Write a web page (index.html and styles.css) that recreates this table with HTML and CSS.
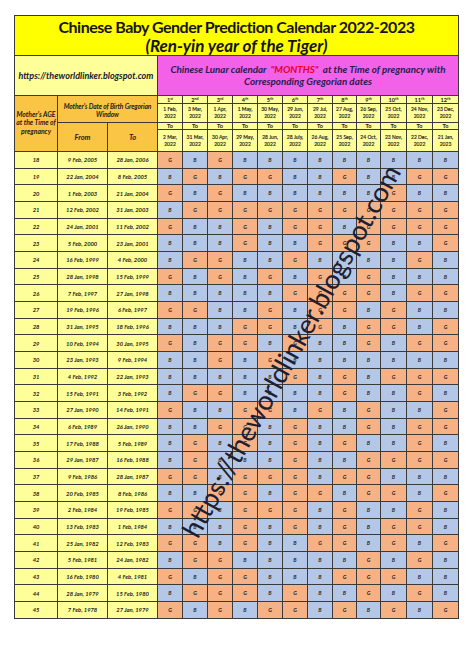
FILE: index.html
```html
<!DOCTYPE html>
<html lang="en">
<head>
<meta charset="utf-8">
<title>Chinese Baby Gender Prediction Calendar 2022-2023</title>
<link rel="stylesheet" href="styles.css">
</head>
<body>
<div class="page">
<table class="chart">
<colgroup>
<col class="c-age"><col class="c-dob"><col class="c-dob">
<col class="c-m25"><col class="c-m25"><col class="c-m25"><col class="c-m25"><col class="c-m25"><col class="c-m25"><col class="c-m25"><col class="c-m24"><col class="c-m24"><col class="c-m26"><col class="c-m26"><col class="c-m26">
</colgroup>
<tr class="r-title"><td colspan="15" class="title"><span class="main">Chinese Baby Gender Prediction Calendar 2022-2023</span><br><span class="sub">(Ren-yin year of the Tiger)</span></td></tr>
<tr class="r-info"><td colspan="3" class="site">https://theworldlinker.blogspot.com</td><td colspan="12" class="lunar">Chinese Lunar calendar &nbsp;<span class="red">"MONTHS"</span>&nbsp; at the Time of pregnancy with<br>Corresponding Gregorian dates</td></tr>
<tr class="h1">
<td rowspan="4" class="hdr age">Mother's AGE at the Time of pregnancy</td>
<td colspan="2" rowspan="2" class="hdr dob">Mother's Date of Birth Gregorian Window</td>
<td class="mon ord">1<sup>st</sup></td><td class="mon ord">2<sup>nd</sup></td><td class="mon ord">3<sup>rd</sup></td><td class="mon ord">4<sup>th</sup></td><td class="mon ord">5<sup>th</sup></td><td class="mon ord">6<sup>th</sup></td><td class="mon ord">7<sup>th</sup></td><td class="mon ord">8<sup>th</sup></td><td class="mon ord">9<sup>th</sup></td><td class="mon ord">10<sup>th</sup></td><td class="mon ord">11<sup>th</sup></td><td class="mon ord">12<sup>th</sup></td>
</tr>
<tr class="h2">
<td class="mon dt">1 Feb,<br>2022</td><td class="mon dt">3 Mar,<br>2022</td><td class="mon dt">1 Apr,<br>2022</td><td class="mon dt">1 May,<br>2022</td><td class="mon dt">30 May,<br>2022</td><td class="mon dt">29 Jun,<br>2022</td><td class="mon dt">29 Jul,<br>2022</td><td class="mon dt">27 Aug,<br>2022</td><td class="mon dt">26 Sep,<br>2022</td><td class="mon dt">25 Oct,<br>2022</td><td class="mon dt">24 Nov,<br>2022</td><td class="mon dt">23 Dec,<br>2022</td>
</tr>
<tr class="h3">
<td rowspan="2" class="hdr ft">From</td><td rowspan="2" class="hdr ft">To</td>
<td class="mon to">To</td><td class="mon to">To</td><td class="mon to">To</td><td class="mon to">To</td><td class="mon to">To</td><td class="mon to">To</td><td class="mon to">To</td><td class="mon to">To</td><td class="mon to">To</td><td class="mon to">To</td><td class="mon to">To</td><td class="mon to">To</td>
</tr>
<tr class="h4">
<td class="mon dt">2 Mar,<br>2022</td><td class="mon dt">31 Mar,<br>2022</td><td class="mon dt">30 Apr,<br>2022</td><td class="mon dt">29 May,<br>2022</td><td class="mon dt">28 Jun,<br>2022</td><td class="mon dt">28 July,<br>2022</td><td class="mon dt">26 Aug,<br>2022</td><td class="mon dt">25 Sep,<br>2022</td><td class="mon dt">24 Oct,<br>2022</td><td class="mon dt">23 Nov,<br>2022</td><td class="mon dt">22 Dec,<br>2022</td><td class="mon dt">21 Jan,<br>2023</td>
</tr>
<tr class="row"><td class="yl">18</td><td class="yl">9 Feb, 2005</td><td class="yl">28 Jan, 2006</td><td class="g">G</td><td class="b">B</td><td class="g">G</td><td class="b">B</td><td class="b">B</td><td class="b">B</td><td class="b">B</td><td class="b">B</td><td class="b">B</td><td class="b">B</td><td class="b">B</td><td class="b">B</td></tr>
<tr class="row"><td class="yl">19</td><td class="yl">22 Jan, 2004</td><td class="yl">8 Feb, 2005</td><td class="b">B</td><td class="g">G</td><td class="b">B</td><td class="g">G</td><td class="g">G</td><td class="b">B</td><td class="b">B</td><td class="g">G</td><td class="b">B</td><td class="b">B</td><td class="g">G</td><td class="g">G</td></tr>
<tr class="row"><td class="yl">20</td><td class="yl">1 Feb, 2003</td><td class="yl">21 Jan, 2004</td><td class="g">G</td><td class="b">B</td><td class="g">G</td><td class="b">B</td><td class="b">B</td><td class="b">B</td><td class="b">B</td><td class="b">B</td><td class="b">B</td><td class="g">G</td><td class="b">B</td><td class="b">B</td></tr>
<tr class="row"><td class="yl">21</td><td class="yl">12 Feb, 2002</td><td class="yl">31 Jan, 2003</td><td class="b">B</td><td class="g">G</td><td class="g">G</td><td class="g">G</td><td class="g">G</td><td class="g">G</td><td class="g">G</td><td class="g">G</td><td class="g">G</td><td class="g">G</td><td class="g">G</td><td class="g">G</td></tr>
<tr class="row"><td class="yl">22</td><td class="yl">24 Jan, 2001</td><td class="yl">11 Feb, 2002</td><td class="g">G</td><td class="b">B</td><td class="b">B</td><td class="g">G</td><td class="b">B</td><td class="g">G</td><td class="g">G</td><td class="b">B</td><td class="g">G</td><td class="g">G</td><td class="g">G</td><td class="g">G</td></tr>
<tr class="row"><td class="yl">23</td><td class="yl">5 Feb, 2000</td><td class="yl">23 Jan, 2001</td><td class="b">B</td><td class="b">B</td><td class="b">B</td><td class="g">G</td><td class="b">B</td><td class="b">B</td><td class="g">G</td><td class="g">G</td><td class="g">G</td><td class="b">B</td><td class="b">B</td><td class="g">G</td></tr>
<tr class="row"><td class="yl">24</td><td class="yl">16 Feb, 1999</td><td class="yl">4 Feb, 2000</td><td class="b">B</td><td class="g">G</td><td class="g">G</td><td class="b">B</td><td class="b">B</td><td class="g">G</td><td class="b">B</td><td class="b">B</td><td class="b">B</td><td class="b">B</td><td class="g">G</td><td class="b">B</td></tr>
<tr class="row"><td class="yl">25</td><td class="yl">28 Jan, 1998</td><td class="yl">15 Feb, 1999</td><td class="g">G</td><td class="b">B</td><td class="g">G</td><td class="b">B</td><td class="g">G</td><td class="b">B</td><td class="g">G</td><td class="b">B</td><td class="g">G</td><td class="b">B</td><td class="b">B</td><td class="b">B</td></tr>
<tr class="row"><td class="yl">26</td><td class="yl">7 Feb, 1997</td><td class="yl">27 Jan, 1998</td><td class="b">B</td><td class="b">B</td><td class="b">B</td><td class="b">B</td><td class="b">B</td><td class="g">G</td><td class="g">G</td><td class="g">G</td><td class="g">G</td><td class="b">B</td><td class="g">G</td><td class="g">G</td></tr>
<tr class="row"><td class="yl">27</td><td class="yl">19 Feb, 1996</td><td class="yl">6 Feb, 1997</td><td class="g">G</td><td class="g">G</td><td class="b">B</td><td class="b">B</td><td class="g">G</td><td class="b">B</td><td class="g">G</td><td class="g">G</td><td class="b">B</td><td class="g">G</td><td class="b">B</td><td class="b">B</td></tr>
<tr class="row"><td class="yl">28</td><td class="yl">31 Jan, 1995</td><td class="yl">18 Feb, 1996</td><td class="b">B</td><td class="b">B</td><td class="b">B</td><td class="g">G</td><td class="g">G</td><td class="b">B</td><td class="g">G</td><td class="b">B</td><td class="g">G</td><td class="g">G</td><td class="b">B</td><td class="g">G</td></tr>
<tr class="row"><td class="yl">29</td><td class="yl">10 Feb, 1994</td><td class="yl">30 Jan, 1995</td><td class="g">G</td><td class="b">B</td><td class="g">G</td><td class="g">G</td><td class="b">B</td><td class="g">G</td><td class="b">B</td><td class="b">B</td><td class="g">G</td><td class="b">B</td><td class="g">G</td><td class="g">G</td></tr>
<tr class="row"><td class="yl">30</td><td class="yl">23 Jan, 1993</td><td class="yl">9 Feb, 1994</td><td class="b">B</td><td class="b">B</td><td class="g">G</td><td class="b">B</td><td class="g">G</td><td class="b">B</td><td class="b">B</td><td class="b">B</td><td class="b">B</td><td class="b">B</td><td class="b">B</td><td class="b">B</td></tr>
<tr class="row"><td class="yl">31</td><td class="yl">4 Feb, 1992</td><td class="yl">22 Jan, 1993</td><td class="b">B</td><td class="b">B</td><td class="b">B</td><td class="b">B</td><td class="b">B</td><td class="g">G</td><td class="b">B</td><td class="g">G</td><td class="b">B</td><td class="g">G</td><td class="g">G</td><td class="g">G</td></tr>
<tr class="row"><td class="yl">32</td><td class="yl">15 Feb, 1991</td><td class="yl">3 Feb, 1992</td><td class="b">B</td><td class="g">G</td><td class="g">G</td><td class="b">B</td><td class="b">B</td><td class="b">B</td><td class="b">B</td><td class="g">G</td><td class="b">B</td><td class="b">B</td><td class="g">G</td><td class="b">B</td></tr>
<tr class="row"><td class="yl">33</td><td class="yl">27 Jan, 1990</td><td class="yl">14 Feb, 1991</td><td class="g">G</td><td class="b">B</td><td class="b">B</td><td class="g">G</td><td class="g">G</td><td class="b">B</td><td class="g">G</td><td class="b">B</td><td class="g">G</td><td class="b">B</td><td class="b">B</td><td class="g">G</td></tr>
<tr class="row"><td class="yl">34</td><td class="yl">6 Feb, 1989</td><td class="yl">26 Jan, 1990</td><td class="b">B</td><td class="b">B</td><td class="g">G</td><td class="g">G</td><td class="b">B</td><td class="g">G</td><td class="b">B</td><td class="b">B</td><td class="g">G</td><td class="b">B</td><td class="g">G</td><td class="g">G</td></tr>
<tr class="row"><td class="yl">35</td><td class="yl">17 Feb, 1988</td><td class="yl">5 Feb, 1989</td><td class="b">B</td><td class="g">G</td><td class="b">B</td><td class="g">G</td><td class="b">B</td><td class="g">G</td><td class="b">B</td><td class="g">G</td><td class="b">B</td><td class="b">B</td><td class="g">G</td><td class="b">B</td></tr>
<tr class="row"><td class="yl">36</td><td class="yl">29 Jan, 1987</td><td class="yl">16 Feb, 1988</td><td class="b">B</td><td class="g">G</td><td class="b">B</td><td class="b">B</td><td class="b">B</td><td class="g">G</td><td class="b">B</td><td class="b">B</td><td class="g">G</td><td class="g">G</td><td class="g">G</td><td class="g">G</td></tr>
<tr class="row"><td class="yl">37</td><td class="yl">9 Feb, 1986</td><td class="yl">28 Jan, 1987</td><td class="g">G</td><td class="g">G</td><td class="b">B</td><td class="g">G</td><td class="g">G</td><td class="g">G</td><td class="b">B</td><td class="g">G</td><td class="g">G</td><td class="b">B</td><td class="b">B</td><td class="b">B</td></tr>
<tr class="row"><td class="yl">38</td><td class="yl">20 Feb, 1985</td><td class="yl">8 Feb, 1986</td><td class="b">B</td><td class="b">B</td><td class="g">G</td><td class="g">G</td><td class="b">B</td><td class="g">G</td><td class="g">G</td><td class="b">B</td><td class="g">G</td><td class="g">G</td><td class="b">B</td><td class="g">G</td></tr>
<tr class="row"><td class="yl">39</td><td class="yl">2 Feb, 1984</td><td class="yl">19 Feb, 1985</td><td class="g">G</td><td class="g">G</td><td class="b">B</td><td class="g">G</td><td class="g">G</td><td class="g">G</td><td class="b">B</td><td class="g">G</td><td class="b">B</td><td class="b">B</td><td class="g">G</td><td class="b">B</td></tr>
<tr class="row"><td class="yl">40</td><td class="yl">13 Feb, 1983</td><td class="yl">1 Feb, 1984</td><td class="b">B</td><td class="b">B</td><td class="b">B</td><td class="g">G</td><td class="b">B</td><td class="g">G</td><td class="b">B</td><td class="g">G</td><td class="b">B</td><td class="g">G</td><td class="g">G</td><td class="b">B</td></tr>
<tr class="row"><td class="yl">41</td><td class="yl">25 Jan, 1982</td><td class="yl">12 Feb, 1983</td><td class="g">G</td><td class="g">G</td><td class="b">B</td><td class="g">G</td><td class="b">B</td><td class="b">B</td><td class="g">G</td><td class="g">G</td><td class="b">B</td><td class="g">G</td><td class="b">B</td><td class="g">G</td></tr>
<tr class="row"><td class="yl">42</td><td class="yl">5 Feb, 1981</td><td class="yl">24 Jan, 1982</td><td class="b">B</td><td class="g">G</td><td class="g">G</td><td class="b">B</td><td class="b">B</td><td class="b">B</td><td class="b">B</td><td class="b">B</td><td class="g">G</td><td class="b">B</td><td class="g">G</td><td class="b">B</td></tr>
<tr class="row"><td class="yl">43</td><td class="yl">16 Feb, 1980</td><td class="yl">4 Feb, 1981</td><td class="g">G</td><td class="b">B</td><td class="g">G</td><td class="g">G</td><td class="b">B</td><td class="b">B</td><td class="b">B</td><td class="g">G</td><td class="g">G</td><td class="g">G</td><td class="b">B</td><td class="b">B</td></tr>
<tr class="row"><td class="yl">44</td><td class="yl">28 Jan, 1979</td><td class="yl">15 Feb, 1980</td><td class="b">B</td><td class="g">G</td><td class="g">G</td><td class="g">G</td><td class="b">B</td><td class="g">G</td><td class="b">B</td><td class="b">B</td><td class="g">G</td><td class="b">B</td><td class="g">G</td><td class="b">B</td></tr>
<tr class="row"><td class="yl">45</td><td class="yl">7 Feb, 1978</td><td class="yl">27 Jan, 1979</td><td class="g">G</td><td class="b">B</td><td class="g">G</td><td class="b">B</td><td class="g">G</td><td class="g">G</td><td class="b">B</td><td class="g">G</td><td class="b">B</td><td class="g">G</td><td class="b">B</td><td class="g">G</td></tr>
</table>
<div class="watermark">https://theworldlinker.blogspot.com</div>
</div>
</body>
</html>
```
FILE: styles.css
```css
html, body {
  margin: 0;
  padding: 0;
  background: #ffffff;
}

.page {
  position: relative;
  width: 474px;
  height: 671px;
  box-sizing: border-box;
  padding: 15px 0 0 14px;
  font-family: Lato, "Open Sans", sans-serif;
  color: #1c1c1c;
  overflow: hidden;
}

.chart {
  border-collapse: collapse;
  table-layout: fixed;
  width: 445px;
}

.chart td {
  border: 1px solid #3a3a3a;
  padding: 0;
  text-align: center;
  vertical-align: middle;
  overflow: hidden;
  white-space: nowrap;
}

.c-age { width: 43px; }
.c-dob { width: 50px; }
.c-m25 { width: 25px; }
.c-m24 { width: 24px; }
.c-m26 { width: 26px; }

.r-title { height: 40px; }
.r-info { height: 40px; }
.h1 { height: 8px; }
.h2 { height: 19px; }
.h3 { height: 6px; }
.h4 { height: 22px; }
.row { height: 16.68px; }

.chart .title {
  background: #ffff00;
  font-size: 17px;
  font-weight: 700;
  line-height: 19px;
  color: #141414;
  padding-top: 1px;
}

.title .main {
  font-size: 16px;
  letter-spacing: -0.5px;
}

.title .sub {
  font-style: italic;
}

.chart .site {
  background: #ffff99;
  font-size: 9px;
  font-weight: 700;
  font-style: italic;
  color: #1a1a2a;
}

.chart .lunar {
  background: #f361e8;
  font-size: 9.8px;
  font-weight: 700;
  font-style: italic;
  line-height: 12px;
  color: #2c1a4c;
  white-space: normal;
  padding-bottom: 2px;
}

.lunar .red {
  color: #e8001e;
}

.chart .hdr {
  background: #fac444;
  font-weight: 700;
  font-style: italic;
  white-space: normal;
}

.chart .age {
  font-size: 6.8px;
  line-height: 8.4px;
  vertical-align: top;
  padding-top: 14px;
}

.chart .dob {
  font-size: 6.6px;
  line-height: 8.3px;
  vertical-align: top;
  padding-top: 6px;
  letter-spacing: -0.1px;
}

.chart .ft {
  font-size: 7.4px;
}

.mon {
  background: #ffff99;
  font-weight: 700;
  color: #1c1c1c;
}

.chart .ord {
  font-size: 5.6px;
  line-height: 7px;
}

.ord sup {
  font-size: 3.6px;
  vertical-align: 2px;
  line-height: 0;
}

.chart .dt {
  font-size: 5px;
  line-height: 6.6px;
  font-weight: 400;
  -webkit-text-stroke: 0.15px #1c1c1c;
}

.chart .to {
  font-size: 5.6px;
  line-height: 6px;
}

.yl {
  background: #ffff99;
  font-size: 5.8px;
  font-weight: 700;
  font-style: italic;
}

.g, .b {
  font-size: 5.4px;
  font-weight: 700;
  font-style: italic;
  color: #2a2a2a;
}

.g { background: #f6b184; }
.b { background: #b5c7e6; }

.watermark {
  position: absolute;
  left: 61px;
  top: 336px;
  width: 460px;
  height: 30px;
  line-height: 30px;
  text-align: center;
  font-family: Lato, sans-serif;
  font-size: 27px;
  font-weight: 400;
  color: #1d2030;
  transform: rotate(-61deg);
  transform-origin: 50% 50%;
  white-space: nowrap;
  pointer-events: none;
}
```
